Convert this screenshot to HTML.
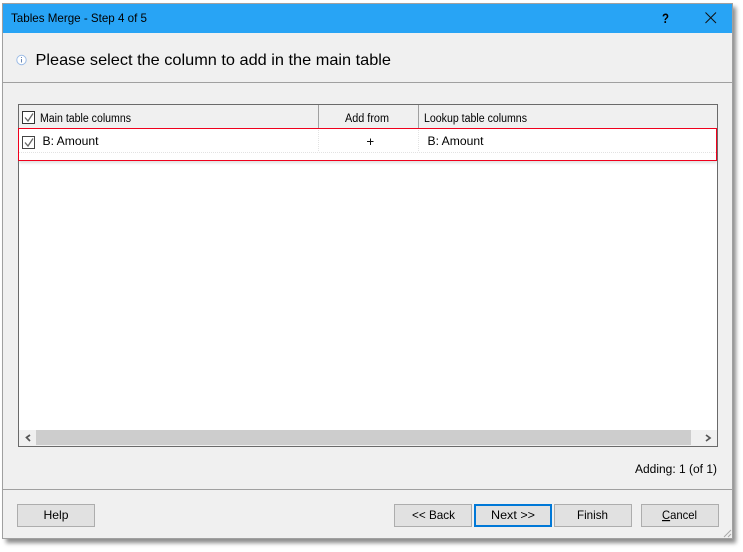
<!DOCTYPE html>
<html>
<head>
<meta charset="utf-8">
<style>
html,body{margin:0;padding:0;background:#fff;width:743px;height:552px;overflow:hidden}
svg{display:block}
text{font-family:"Liberation Sans",sans-serif;fill:#000}
</style>
</head>
<body>
<svg width="743" height="552" viewBox="0 0 743 552" xmlns="http://www.w3.org/2000/svg">
<defs>
<filter id="s" x="-5%" y="-5%" width="110%" height="110%"><feGaussianBlur stdDeviation="2"/></filter>
<filter id="r" x="-5%" y="-50%" width="110%" height="200%"><feGaussianBlur stdDeviation="1.2"/></filter>
</defs>
<rect x="6" y="7" width="730" height="536" fill="#8c8c8c" filter="url(#s)"/>
<rect x="2.5" y="3.5" width="730" height="535" fill="#f0f0f0" stroke="#a0a0a0"/>
<rect x="3" y="4" width="729" height="29" fill="#28a4f5"/>
<text x="11" y="22" font-size="12" textLength="136" lengthAdjust="spacingAndGlyphs">Tables Merge - Step 4 of 5</text>
<text x="662" y="23" font-size="14" font-weight="bold" textLength="7" lengthAdjust="spacingAndGlyphs">?</text>
<path d="M705.5 12.5L716 23M716 12.5L705.5 23" stroke="#111" stroke-width="1" fill="none"/>

<circle cx="21.5" cy="60" r="4.7" fill="#fff" stroke="#9cbce6" stroke-width="1"/>
<rect x="21" y="59" width="1" height="3.5" fill="#6b88b5"/><rect x="21" y="57" width="1" height="1" fill="#6b88b5"/>
<text x="35.5" y="65" font-size="16" textLength="355.5" lengthAdjust="spacingAndGlyphs">Please select the column to add in the main table</text>
<rect x="3" y="82" width="729" height="1" fill="#a0a0a0"/>

<rect x="18.5" y="104.5" width="699" height="342" fill="#fff" stroke="#6a6a6a"/>
<rect x="19" y="105" width="698" height="23" fill="#f0f0f0"/>
<rect x="318" y="105" width="1" height="23" fill="#a0a0a0"/>
<rect x="418" y="105" width="1" height="23" fill="#a0a0a0"/>
<rect x="22.5" y="111.5" width="12" height="12" fill="#fff" stroke="#333"/>
<path d="M25 117.5L28 121L33 113.5" stroke="#666" stroke-width="1.3" fill="none"/>
<text x="40" y="122" font-size="11.5" textLength="91" lengthAdjust="spacingAndGlyphs">Main table columns</text>
<text x="345" y="122" font-size="11.5" textLength="44" lengthAdjust="spacingAndGlyphs">Add from</text>
<text x="424" y="122" font-size="11.5" textLength="103" lengthAdjust="spacingAndGlyphs">Lookup table columns</text>

<rect x="19" y="157" width="698" height="6" fill="#999" opacity=".3" filter="url(#r)"/>
<rect x="19" y="129" width="698" height="31" fill="#fff"/>
<path d="M19 152.5H717M318.5 130V152M418.5 130V152" stroke="#e2e2e2" stroke-dasharray="1 1" fill="none"/>
<rect x="22.5" y="136.5" width="12" height="12" fill="#fff" stroke="#444"/>
<path d="M25 142.5L28 146L33 138.5" stroke="#666" stroke-width="1.3" fill="none"/>
<text x="42.5" y="145" font-size="11.5" textLength="56" lengthAdjust="spacingAndGlyphs">B: Amount</text>
<path d="M367 141.5H373.5M370.5 138.5V145" stroke="#111" stroke-width="1" fill="none"/>
<text x="427.5" y="145" font-size="11.5" textLength="56" lengthAdjust="spacingAndGlyphs">B: Amount</text>
<rect x="18.5" y="128.5" width="698" height="32" fill="none" stroke="#f0001c" stroke-width="1"/>

<rect x="19" y="430" width="698" height="16" fill="#f0f0f0"/>
<rect x="36" y="430" width="655" height="15" fill="#cdcdcd"/>
<path d="M30 435L26.5 437.5L30 441" stroke="#555" stroke-width="1.7" fill="none"/>
<path d="M706 435L710 438L706 441" stroke="#555" stroke-width="1.7" fill="none"/>
<rect x="18.5" y="446" width="699" height="1" fill="#6a6a6a"/>

<text x="635" y="473" font-size="11.5" textLength="82" lengthAdjust="spacingAndGlyphs">Adding: 1 (of 1)</text>
<rect x="3" y="489" width="729" height="1" fill="#a0a0a0"/>

<g fill="#e1e1e1" stroke="#adadad">
<rect x="17.5" y="504.5" width="77" height="22"/>
<rect x="394.5" y="504.5" width="77" height="22"/>
<rect x="554.5" y="504.5" width="77" height="22"/>
<rect x="641.5" y="504.5" width="77" height="22"/>
</g>
<rect x="475" y="505" width="76" height="21" fill="#e1e1e1" stroke="#0078d7" stroke-width="2"/>
<text x="43.5" y="519" font-size="12" textLength="25" lengthAdjust="spacingAndGlyphs">Help</text>
<text x="412" y="519" font-size="12" textLength="43" lengthAdjust="spacingAndGlyphs" xml:space="preserve">&lt;&lt; Back</text>
<text x="491" y="519" font-size="12" textLength="44" lengthAdjust="spacingAndGlyphs" xml:space="preserve">Next &gt;&gt;</text>
<text x="577" y="519" font-size="12" textLength="31" lengthAdjust="spacingAndGlyphs">Finish</text>
<text x="662" y="519" font-size="12" textLength="35" lengthAdjust="spacingAndGlyphs"><tspan text-decoration="underline">C</tspan>ancel</text>
<path d="M724 537L731 530M728 537L731 534" stroke="#aaa" stroke-width="1" fill="none"/>
</svg>
</body>
</html>
